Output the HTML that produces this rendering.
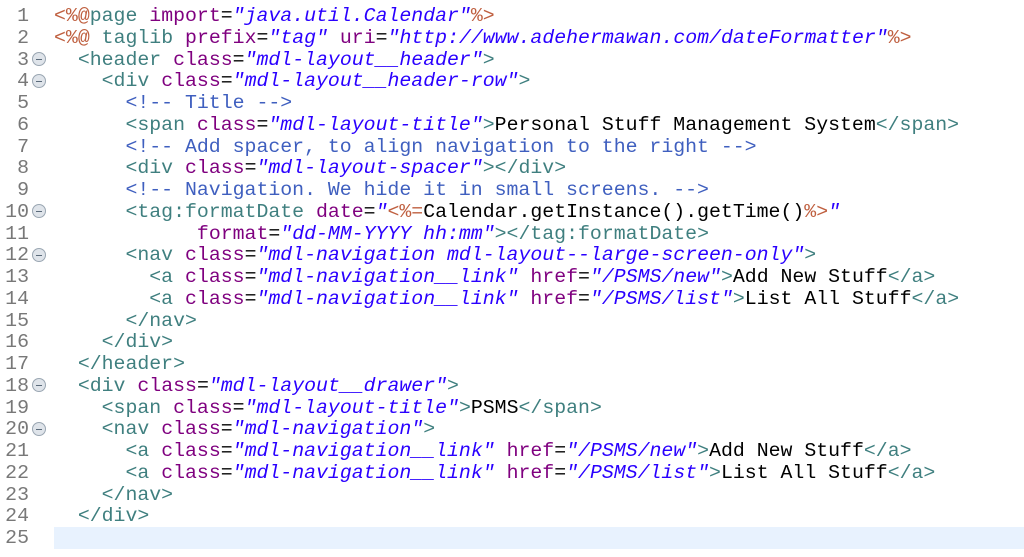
<!DOCTYPE html>
<html><head><meta charset="utf-8"><style>
body{margin:0;width:1024px;height:557px;background:#fff;overflow:hidden;position:relative;font-family:"Liberation Mono",monospace;font-size:19.85px;}
.ln{position:absolute;left:0;width:29px;text-align:right;color:#787878;height:21.75px;line-height:21.75px;}
.c{position:absolute;left:54px;white-space:pre;height:21.75px;line-height:21.75px;color:#000;}
.f{position:absolute;left:32px;width:14px;height:14px;border-radius:50%;background:#dfe4ea;border:1px solid #9aa6b2;box-sizing:border-box;}
.f:after{content:"";position:absolute;left:3px;right:3px;top:5.5px;height:1.5px;background:#5a6a7a;}
.t{color:#3f7f7f}.a{color:#7f007f}.v{color:#2a00ff;font-style:italic}.m{color:#3f5fbf}.j{color:#bf5f3f}
.hl{position:absolute;left:54px;right:0;top:527px;height:21.75px;background:#e8f2fe;}
</style></head><body>
<div class="hl"></div>
<div class="ln" style="top:5px">1</div><div class="c" style="top:5px"><span class="j">&lt;%@</span><span class="t">page</span> <span class="a">import</span>=<span class="v">"java.util.Calendar"</span><span class="j">%&gt;</span></div>
<div class="ln" style="top:26.75px">2</div><div class="c" style="top:26.75px"><span class="j">&lt;%@</span> <span class="t">taglib</span> <span class="a">prefix</span>=<span class="v">"tag"</span> <span class="a">uri</span>=<span class="v">"http://www.adehermawan.com/dateFormatter"</span><span class="j">%&gt;</span></div>
<div class="ln" style="top:48.5px">3</div><div class="f" style="top:52px"></div><div class="c" style="top:48.5px">  <span class="t">&lt;header</span> <span class="a">class</span>=<span class="v">"mdl-layout__header"</span><span class="t">&gt;</span></div>
<div class="ln" style="top:70.25px">4</div><div class="f" style="top:74px"></div><div class="c" style="top:70.25px">    <span class="t">&lt;div</span> <span class="a">class</span>=<span class="v">"mdl-layout__header-row"</span><span class="t">&gt;</span></div>
<div class="ln" style="top:92px">5</div><div class="c" style="top:92px">      <span class="m">&lt;!-- Title --&gt;</span></div>
<div class="ln" style="top:113.75px">6</div><div class="c" style="top:113.75px">      <span class="t">&lt;span</span> <span class="a">class</span>=<span class="v">"mdl-layout-title"</span><span class="t">&gt;</span>Personal Stuff Management System<span class="t">&lt;/span&gt;</span></div>
<div class="ln" style="top:135.5px">7</div><div class="c" style="top:135.5px">      <span class="m">&lt;!-- Add spacer, to align navigation to the right --&gt;</span></div>
<div class="ln" style="top:157.25px">8</div><div class="c" style="top:157.25px">      <span class="t">&lt;div</span> <span class="a">class</span>=<span class="v">"mdl-layout-spacer"</span><span class="t">&gt;&lt;/div&gt;</span></div>
<div class="ln" style="top:179px">9</div><div class="c" style="top:179px">      <span class="m">&lt;!-- Navigation. We hide it in small screens. --&gt;</span></div>
<div class="ln" style="top:200.75px">10</div><div class="f" style="top:204px"></div><div class="c" style="top:200.75px">      <span class="t">&lt;tag:formatDate</span> <span class="a">date</span>=<span class="v">"</span><span class="j">&lt;%=</span>Calendar.getInstance().getTime()<span class="j">%&gt;</span><span class="v">"</span></div>
<div class="ln" style="top:222.5px">11</div><div class="c" style="top:222.5px">            <span class="a">format</span>=<span class="v">"dd-MM-YYYY hh:mm"</span><span class="t">&gt;&lt;/tag:formatDate&gt;</span></div>
<div class="ln" style="top:244.25px">12</div><div class="f" style="top:248px"></div><div class="c" style="top:244.25px">      <span class="t">&lt;nav</span> <span class="a">class</span>=<span class="v">"mdl-navigation mdl-layout--large-screen-only"</span><span class="t">&gt;</span></div>
<div class="ln" style="top:266px">13</div><div class="c" style="top:266px">        <span class="t">&lt;a</span> <span class="a">class</span>=<span class="v">"mdl-navigation__link"</span> <span class="a">href</span>=<span class="v">"/PSMS/new"</span><span class="t">&gt;</span>Add New Stuff<span class="t">&lt;/a&gt;</span></div>
<div class="ln" style="top:287.75px">14</div><div class="c" style="top:287.75px">        <span class="t">&lt;a</span> <span class="a">class</span>=<span class="v">"mdl-navigation__link"</span> <span class="a">href</span>=<span class="v">"/PSMS/list"</span><span class="t">&gt;</span>List All Stuff<span class="t">&lt;/a&gt;</span></div>
<div class="ln" style="top:309.5px">15</div><div class="c" style="top:309.5px">      <span class="t">&lt;/nav&gt;</span></div>
<div class="ln" style="top:331.25px">16</div><div class="c" style="top:331.25px">    <span class="t">&lt;/div&gt;</span></div>
<div class="ln" style="top:353px">17</div><div class="c" style="top:353px">  <span class="t">&lt;/header&gt;</span></div>
<div class="ln" style="top:374.75px">18</div><div class="f" style="top:378px"></div><div class="c" style="top:374.75px">  <span class="t">&lt;div</span> <span class="a">class</span>=<span class="v">"mdl-layout__drawer"</span><span class="t">&gt;</span></div>
<div class="ln" style="top:396.5px">19</div><div class="c" style="top:396.5px">    <span class="t">&lt;span</span> <span class="a">class</span>=<span class="v">"mdl-layout-title"</span><span class="t">&gt;</span>PSMS<span class="t">&lt;/span&gt;</span></div>
<div class="ln" style="top:418.25px">20</div><div class="f" style="top:422px"></div><div class="c" style="top:418.25px">    <span class="t">&lt;nav</span> <span class="a">class</span>=<span class="v">"mdl-navigation"</span><span class="t">&gt;</span></div>
<div class="ln" style="top:440px">21</div><div class="c" style="top:440px">      <span class="t">&lt;a</span> <span class="a">class</span>=<span class="v">"mdl-navigation__link"</span> <span class="a">href</span>=<span class="v">"/PSMS/new"</span><span class="t">&gt;</span>Add New Stuff<span class="t">&lt;/a&gt;</span></div>
<div class="ln" style="top:461.75px">22</div><div class="c" style="top:461.75px">      <span class="t">&lt;a</span> <span class="a">class</span>=<span class="v">"mdl-navigation__link"</span> <span class="a">href</span>=<span class="v">"/PSMS/list"</span><span class="t">&gt;</span>List All Stuff<span class="t">&lt;/a&gt;</span></div>
<div class="ln" style="top:483.5px">23</div><div class="c" style="top:483.5px">    <span class="t">&lt;/nav&gt;</span></div>
<div class="ln" style="top:505.25px">24</div><div class="c" style="top:505.25px">  <span class="t">&lt;/div&gt;</span></div>
<div class="ln" style="top:527px">25</div>
</body></html>
